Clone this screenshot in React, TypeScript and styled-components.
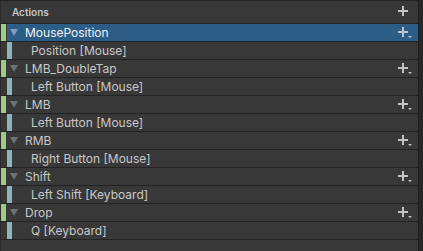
import { createGlobalStyle } from "styled-components";
import styled from "styled-components";

const GlobalStyle = createGlobalStyle`
  html, body {
    margin: 0;
    padding: 0;
    background: #282828;
  }
  body {
    font-family: Inter, "Noto Sans", sans-serif;
    -webkit-font-smoothing: antialiased;
  }
`;

const Panel = styled.div`
  box-sizing: border-box;
  width: 419px;
  height: 251px;
  background: #383838;
  border-top: 1px solid #242424;
  border-left: 1px solid #2a2a2a;
  border-right: 1px solid #1f1f1f;
  display: flex;
  flex-direction: column;
`;

const Header = styled.div`
  box-sizing: border-box;
  height: 23px;
  border-bottom: 1px solid #232323;
  display: flex;
  align-items: center;
  padding-left: 11px;
  padding-right: 4px;
  color: #c4c4c4;
  font-size: 10px;
  font-weight: 600;
`;

const Title = styled.span`
  flex: 1;
`;

const Row = styled.div<{ $selected?: boolean }>`
  box-sizing: border-box;
  height: 18px;
  border-bottom: 1px solid #232323;
  display: flex;
  align-items: stretch;
  background: ${(p) => (p.$selected ? "#2c5d87" : "#383838")};
  color: ${(p) => (p.$selected ? "#f2f2f2" : "#c8c8c8")};
  font-size: 12px;
  padding-right: 4px;
`;

const Bar = styled.div<{ $color: string; $indent: number }>`
  width: 5px;
  margin-left: ${(p) => p.$indent}px;
  background: ${(p) => p.$color};
  flex: none;
`;

const Gutter = styled.div`
  width: 1px;
  background: #383838;
  flex: none;
`;

const Label = styled.div<{ $pad: number }>`
  flex: 1;
  display: flex;
  align-items: center;
  padding-left: ${(p) => p.$pad}px;
  line-height: 17px;
  white-space: nowrap;
`;

const Arrow = styled.svg`
  margin-left: 3px;
  margin-right: 7px;
  flex: none;
`;

const PlusBox = styled.div`
  display: flex;
  align-items: center;
`;

function Plus({ caret }: { caret?: boolean }) {
  return (
    <svg width="16" height="14" viewBox="0 0 16 14">
      <rect x="4" y="1" width="2" height="10" fill="#c4c4c4" />
      <rect x="0" y="5" width="10" height="2" fill="#c4c4c4" />
      {caret && <path d="M10 10 H14 L12 12 Z" fill="#c4c4c4" />}
    </svg>
  );
}

const actions = [
  { name: "MousePosition", binding: "Position [Mouse]" },
  { name: "LMB_DoubleTap", binding: "Left Button [Mouse]" },
  { name: "LMB", binding: "Left Button [Mouse]" },
  { name: "RMB", binding: "Right Button [Mouse]" },
  { name: "Shift", binding: "Left Shift [Keyboard]" },
  { name: "Drop", binding: "Q [Keyboard]" },
];

export default function App() {
  return (
    <>
      <GlobalStyle />
      <Panel>
        <Header>
          <Title>Actions</Title>
          <PlusBox>
            <Plus />
          </PlusBox>
        </Header>
        {actions.map((a, i) => (
          <div key={a.name}>
            <Row $selected={i === 0}>
              <Bar $color="#9ccc86" $indent={0} />
              <Gutter />
              <Label $pad={0}>
                <Arrow width="8" height="7" viewBox="0 0 8 7">
                  <path
                    d="M0 0 H8 L4 7 Z"
                    fill={i === 0 ? "#7d9fc0" : "#6f6f6f"}
                  />
                </Arrow>
                {a.name}
              </Label>
              <PlusBox>
                <Plus caret />
              </PlusBox>
            </Row>
            <Row>
              <Bar $color="#8bb5ba" $indent={6} />
              <Label $pad={19}>{a.binding}</Label>
            </Row>
          </div>
        ))}
      </Panel>
    </>
  );
}
